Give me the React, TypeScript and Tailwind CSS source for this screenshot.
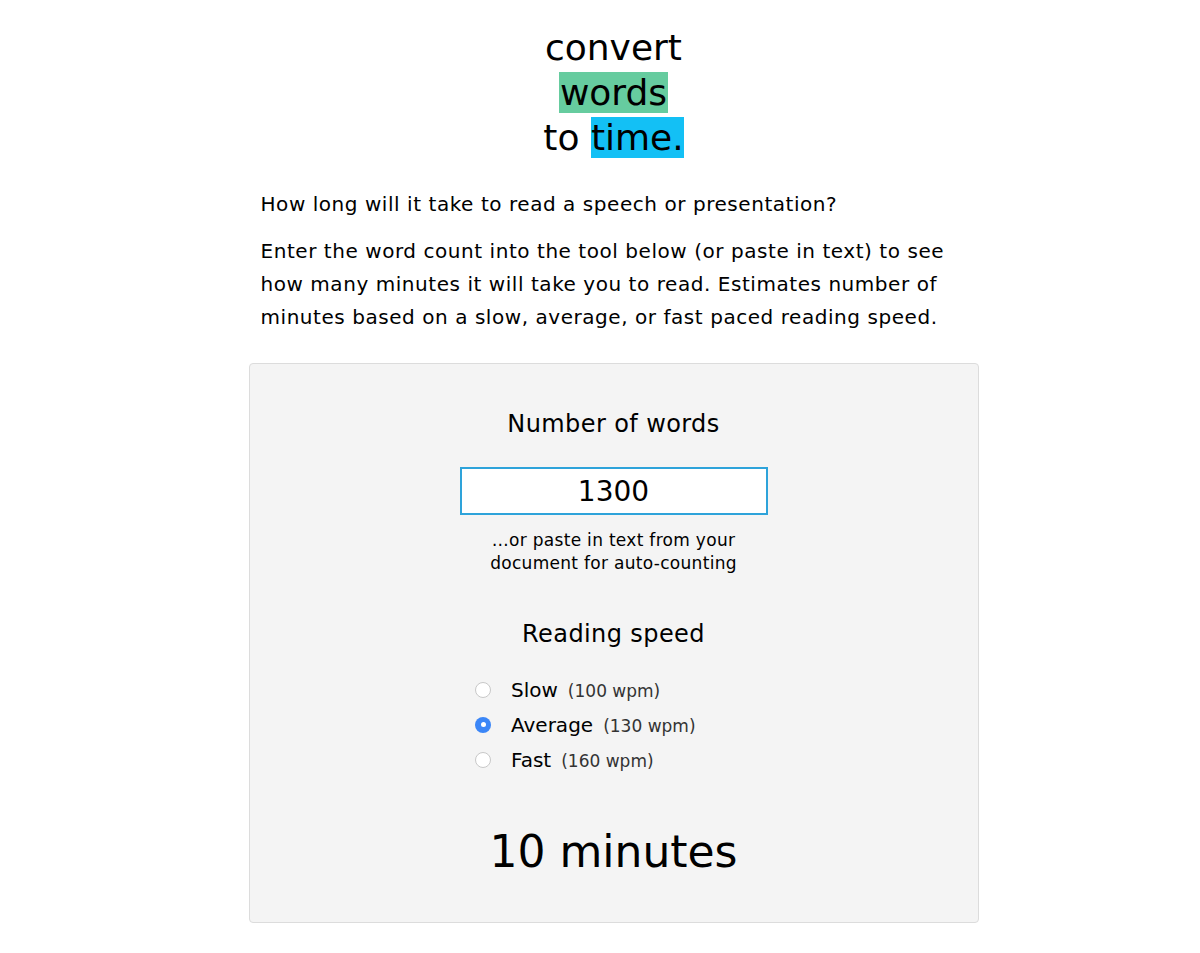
import React, { useState } from "react";

const speeds = [
  { id: "slow", label: "Slow", wpm: 100 },
  { id: "average", label: "Average", wpm: 130 },
  { id: "fast", label: "Fast", wpm: 160 },
];

const App = () => {
  const [words, setWords] = useState("1300");
  const [speed, setSpeed] = useState("average");

  const count = parseInt(words, 10) || 0;
  const wpm = speeds.find((s) => s.id === speed)?.wpm ?? 130;
  const minutes = Math.round(count / wpm);

  return (
    <div className="min-h-screen bg-white text-black font-['DejaVu_Sans',sans-serif]">
      <div className="mx-auto w-[757px] pl-[27px] pt-[25px] pb-8">
        <h1 className="text-center text-[36px] leading-[45px] font-medium">
          <span className="block">convert</span>
          <span className="block">
            <span className="bg-[#66cc9f] px-[1px]">words</span>
          </span>
          <span className="block">
            to <span className="bg-[#13c0f5]">time.</span>
          </span>
        </h1>

        <div className="mt-[28px] px-3 text-[20px] leading-[33px] tracking-[0.55px]">
          <p>How long will it take to read a speech or presentation?</p>
          <p className="mt-[14px]">
            Enter the word count into the tool below (or paste in text) to see
            how many minutes it will take you to read. Estimates number of
            minutes based on a slow, average, or fast paced reading speed.
          </p>
        </div>

        <div className="mt-[29px] rounded border border-[#dcdcdc] bg-[#f4f4f4] pt-[45px] pb-[43px] flex flex-col items-center">
          <h2 className="text-[24px] leading-[30px] tracking-[0.4px]">
            Number of words
          </h2>
          <input
            value={words}
            onChange={(e) => setWords(e.target.value)}
            className="mt-[28px] h-[48px] w-[308px] border-2 border-[#2ea3da] bg-white text-center text-[28px] outline-none"
          />
          <p className="mt-[14px] text-center text-[17px] leading-[23px] tracking-[0.3px]">
            …or paste in text from your
            <br />
            document for auto-counting
          </p>

          <h2 className="mt-[44px] text-[24px] leading-[30px] tracking-[0.4px]">
            Reading speed
          </h2>
          <div className="mt-[23px] w-[277px] flex flex-col">
            {speeds.map((s) => {
              const checked = s.id === speed;
              return (
                <label
                  key={s.id}
                  onClick={() => setSpeed(s.id)}
                  className="flex h-[35px] items-center cursor-pointer"
                >
                  {checked ? (
                    <span className="flex h-[16px] w-[16px] shrink-0 items-center justify-center rounded-full bg-[#3b86f7]">
                      <span className="h-[5px] w-[5px] rounded-full bg-white" />
                    </span>
                  ) : (
                    <span className="h-[16px] w-[16px] shrink-0 rounded-full border border-[#c8c8c8] bg-white" />
                  )}
                  <span className="ml-[20px] flex items-baseline">
                    <span className="text-[20px]">{s.label}</span>
                    <span className="ml-[10px] text-[17px] text-[#333]">
                      ({s.wpm} wpm)
                    </span>
                  </span>
                </label>
              );
            })}
          </div>

          <div className="mt-[47px] text-[44px] leading-[55px]">
            {minutes} minutes
          </div>
        </div>
      </div>
    </div>
  );
};

export default App;
